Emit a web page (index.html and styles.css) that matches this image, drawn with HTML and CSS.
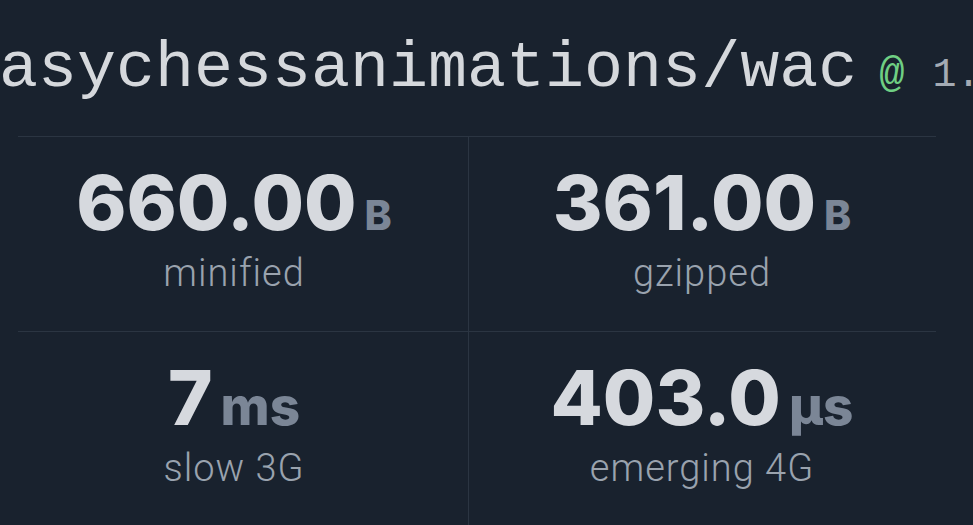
FILE: index.html
```html
<!DOCTYPE html>
<html lang="en">
<head>
<meta charset="utf-8">
<title>bundle size</title>
<link rel="stylesheet" href="styles.css">
</head>
<body>
<main class="page">
  <h1 class="package-name">
    <span class="name">@easychessanimations/wac</span><span class="sep">@</span><span class="version">1.0.0</span>
  </h1>
  <section class="stats">
    <div class="divider"></div>
    <div class="row">
      <div class="stat">
        <div class="value">660.00<span class="unit caps">B</span></div>
        <div class="label">minified</div>
      </div>
      <div class="stat right">
        <div class="value">361.00<span class="unit caps">B</span></div>
        <div class="label">gzipped</div>
      </div>
    </div>
    <div class="divider"></div>
    <div class="row">
      <div class="stat">
        <div class="value">7<span class="unit">ms</span></div>
        <div class="label">slow 3G</div>
      </div>
      <div class="stat right">
        <div class="value">403.0<span class="unit">µs</span></div>
        <div class="label">emerging 4G</div>
      </div>
    </div>
  </section>
</main>
</body>
</html>
```
FILE: styles.css
```css
html, body {
  margin: 0;
  padding: 0;
  background: #19222e;
  overflow: hidden;
}
.page {
  width: 973px;
  height: 525px;
  overflow: hidden;
}
.package-name {
  margin: 37px 0 0 -79px;
  font-family: "Liberation Mono", monospace;
  font-weight: 400;
  font-size: 65px;
  line-height: 65px;
  white-space: nowrap;
  color: #d5d8dc;
  display: flex;
  align-items: baseline;
}
.sep {
  font-size: 42px;
  line-height: 1;
  color: #6fcf83;
  margin: 0 28px 0 22px;
}
.version {
  font-size: 40px;
  line-height: 1;
  color: #a4abb4;
}
.stats {
  margin-top: 34px;
  width: 936px;
}
.divider {
  height: 1px;
  margin-left: 18px;
  background: #2b3542;
}
.row {
  display: grid;
  grid-template-columns: 468px 468px;
}
.stat {
  padding: 27px 0 39px;
  text-align: center;
}
.stat.right {
  box-shadow: inset 1px 0 0 #2b3542;
}
.value {
  font-family: Inter, "Liberation Sans", sans-serif;
  font-weight: 800;
  font-size: 76px;
  line-height: 76px;
  color: #d6d9de;
}
.unit {
  font-size: 53px;
  line-height: 1;
  color: #7b8696;
  margin-left: 8px;
}
.unit.caps {
  font-size: 41px;
}
.label {
  margin-top: 14px;
  font-family: Roboto, "Liberation Sans", sans-serif;
  font-weight: 300;
  font-size: 38px;
  line-height: 38px;
  letter-spacing: 1px;
  color: #9aa3ae;
}
```
